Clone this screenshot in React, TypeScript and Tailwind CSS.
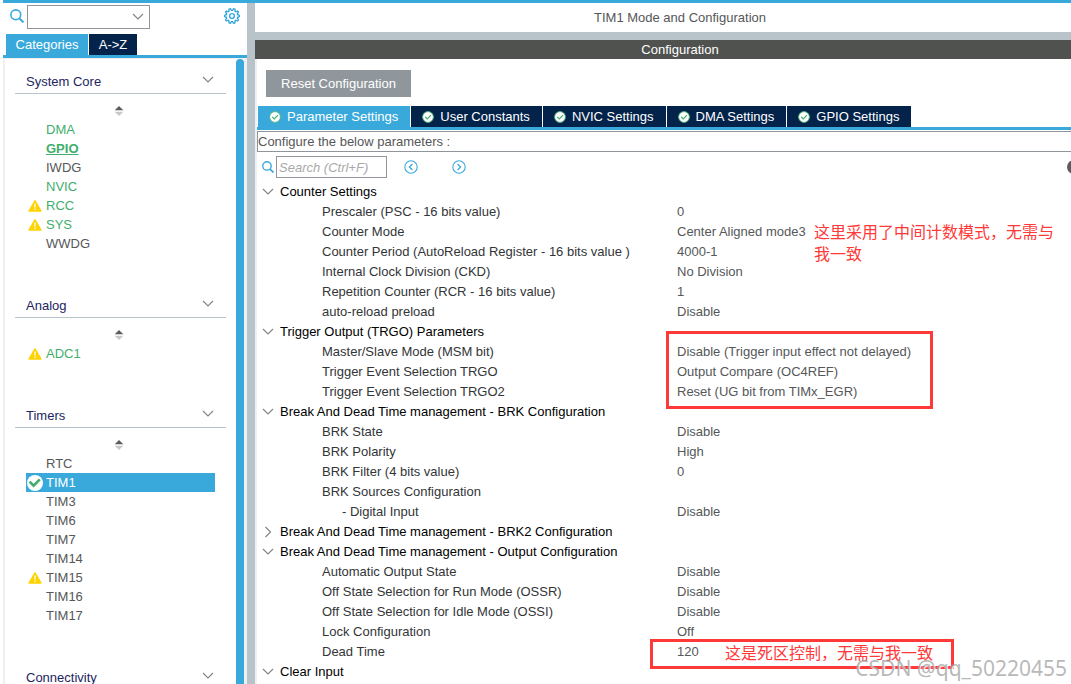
import React from "react";

type Status = "none" | "warning" | "ok";
type Item = { name: string; tone?: "green" | "gray"; status?: Status; active?: boolean; strong?: boolean };
type Category = { title: string; items: Item[] };

const categories: Category[] = [
  {
    title: "System Core",
    items: [
      { name: "DMA", tone: "green" },
      { name: "GPIO", tone: "green", strong: true },
      { name: "IWDG" },
      { name: "NVIC", tone: "green" },
      { name: "RCC", tone: "green", status: "warning" },
      { name: "SYS", tone: "green", status: "warning" },
      { name: "WWDG" },
    ],
  },
  { title: "Analog", items: [{ name: "ADC1", tone: "green", status: "warning" }] },
  {
    title: "Timers",
    items: [
      { name: "RTC" },
      { name: "TIM1", status: "ok", active: true },
      { name: "TIM3" },
      { name: "TIM6" },
      { name: "TIM7" },
      { name: "TIM14" },
      { name: "TIM15", status: "warning" },
      { name: "TIM16" },
      { name: "TIM17" },
    ],
  },
  { title: "Connectivity", items: [] },
];

type Param = { label: string; value?: string; nested?: boolean };
type Group = { title: string; open: boolean; params: Param[] };

const groups: Group[] = [
  {
    title: "Counter Settings",
    open: true,
    params: [
      { label: "Prescaler (PSC - 16 bits value)", value: "0" },
      { label: "Counter Mode", value: "Center Aligned mode3" },
      { label: "Counter Period (AutoReload Register - 16 bits value )", value: "4000-1" },
      { label: "Internal Clock Division (CKD)", value: "No Division" },
      { label: "Repetition Counter (RCR - 16 bits value)", value: "1" },
      { label: "auto-reload preload", value: "Disable" },
    ],
  },
  {
    title: "Trigger Output (TRGO) Parameters",
    open: true,
    params: [
      { label: "Master/Slave Mode (MSM bit)", value: "Disable (Trigger input effect not delayed)" },
      { label: "Trigger Event Selection TRGO", value: "Output Compare (OC4REF)" },
      { label: "Trigger Event Selection TRGO2", value: "Reset (UG bit from TIMx_EGR)" },
    ],
  },
  {
    title: "Break And Dead Time management - BRK Configuration",
    open: true,
    params: [
      { label: "BRK State", value: "Disable" },
      { label: "BRK Polarity", value: "High" },
      { label: "BRK Filter (4 bits value)", value: "0" },
      { label: "BRK Sources Configuration" },
      { label: "- Digital Input", value: "Disable", nested: true },
    ],
  },
  { title: "Break And Dead Time management - BRK2 Configuration", open: false, params: [] },
  {
    title: "Break And Dead Time management - Output Configuration",
    open: true,
    params: [
      { label: "Automatic Output State", value: "Disable" },
      { label: "Off State Selection for Run Mode (OSSR)", value: "Disable" },
      { label: "Off State Selection for Idle Mode (OSSI)", value: "Disable" },
      { label: "Lock Configuration", value: "Off" },
      { label: "Dead Time", value: "120" },
    ],
  },
  { title: "Clear Input", open: true, params: [] },
];

const tabs = ["Parameter Settings", "User Constants", "NVIC Settings", "DMA Settings", "GPIO Settings"];

function SearchIcon({ className }: { className: string }) {
  return (
    <svg viewBox="0 0 14 14" className={className} fill="none" stroke="#39a9dc" strokeWidth="1.6">
      <circle cx="5.8" cy="5.8" r="4.9" />
      <path d="M9.4 9.4 13.4 13.4" strokeWidth="2" />
    </svg>
  );
}

function Chevron({ open = true }: { open?: boolean }) {
  return (
    <svg viewBox="0 0 12 12" className="h-3 w-3 shrink-0" fill="none" stroke="#858585" strokeWidth="1.2">
      <path d={open ? "M1 3 6 8 11 3" : "M3.5 1 8.5 6 3.5 11"} />
    </svg>
  );
}

const gearPath = (() => {
  const points: string[] = [];
  for (let i = 0; i < 80; i++) {
    const angle = (i / 80) * Math.PI * 2;
    const radius = 6.6 + 0.9 * Math.max(-1, Math.min(1, 1.8 * Math.cos(angle * 10)));
    points.push(`${(8 + radius * Math.cos(angle)).toFixed(2)} ${(8 + radius * Math.sin(angle)).toFixed(2)}`);
  }
  return `M${points.join("L")}Z`;
})();

function GearIcon() {
  return (
    <svg viewBox="0 0 16 16" className="h-4 w-4" fill="none" stroke="#39a9dc" strokeWidth="1.4">
      <path d={gearPath} />
      <circle cx="8" cy="8" r="2.4" />
    </svg>
  );
}

function WarningIcon() {
  return (
    <svg viewBox="0 0 14 12" className="h-3 w-3.5">
      <path d="M7 .8 13 11H1Z" fill="#ffd300" stroke="#ffd300" strokeWidth="1.4" strokeLinejoin="round" />
      <path d="M7 3.6V7.4M7 8.6V10" stroke="#fff" strokeWidth="1.3" />
    </svg>
  );
}

function SelectedIcon() {
  return (
    <svg viewBox="0 0 16 16" className="h-4 w-4">
      <circle cx="8" cy="8" r="8" fill="#fff" />
      <path d="M2.6 6.6 6.6 10.6 12.8 4.4" fill="none" stroke="#3fae6c" strokeWidth="2.6" />
    </svg>
  );
}

function TabCheck() {
  return (
    <svg viewBox="0 0 12 12" className="h-3 w-3 shrink-0">
      <circle cx="6" cy="6" r="5.4" fill="#fff" stroke="#4fb57c" strokeWidth="0.9" />
      <path d="M3.2 5.8 5.3 7.9 9 4.2" fill="none" stroke="#3fae6c" strokeWidth="1.2" />
    </svg>
  );
}

function SortIcon() {
  return (
    <svg viewBox="0 0 10 10" className="h-2.5 w-2.5">
      <path d="M5 0 9.3 4.2H.7Z" fill="#5c5c5c" />
      <path d="M5 10 9.3 5.8H.7Z" fill="#c8c8c8" />
    </svg>
  );
}

function StepIcon({ back }: { back: boolean }) {
  return (
    <svg viewBox="0 0 14 14" className="h-3.5 w-3.5" fill="none" stroke="#39a9dc" strokeWidth="1.1">
      <circle cx="7" cy="7" r="6.2" />
      <path d={back ? "M8.4 4 5.4 7 8.4 10" : "M5.6 4 8.6 7 5.6 10"} strokeWidth="1.3" />
    </svg>
  );
}

function CategoryBlock({ title, items }: Category) {
  return (
    <section className="mb-10">
      <h2 className="mx-2.5 border-b border-[#b8c4ca]">
        <button className="flex h-6 w-full items-start justify-between pl-[11px] pr-3 pt-[3px] text-[#23255f]">
          {title}
          <span className="flex pt-0.5">
            <Chevron />
          </span>
        </button>
      </h2>
      {items.length > 0 && (
        <>
          <div className="flex h-[26px] items-center justify-center pr-[3px] pt-2">
            <button aria-label={`Sort ${title}`}>
              <SortIcon />
            </button>
          </div>
          <ul className="mx-[21px]">
            {items.map((item) => (
              <li key={item.name}>
                <button
                  className={`flex h-[19px] w-full items-center ${
                    item.active ? "bg-[#39a9dc] text-white" : item.tone === "green" ? "text-[#3fae6c]" : "text-[#555759]"
                  }`}
                >
                  <span className="flex w-5 shrink-0 justify-center pr-[3px]">
                    {item.status === "warning" && <WarningIcon />}
                    {item.status === "ok" && <SelectedIcon />}
                  </span>
                  <span className={item.strong ? "font-bold underline" : ""}>{item.name}</span>
                </button>
              </li>
            ))}
          </ul>
        </>
      )}
    </section>
  );
}

function Sidebar() {
  return (
    <aside className="flex w-[244px] shrink-0 flex-col overflow-hidden">
      <div className="flex h-[31px] shrink-0 items-start pl-[7px] pr-1 pt-0.5">
        <label htmlFor="peripheral" className="mt-1" aria-label="Find peripheral">
          <SearchIcon className="h-3.5 w-3.5" />
        </label>
        <div className="relative ml-[3px]">
          <select id="peripheral" className="block h-6 w-[123px] appearance-none border border-[#8f959b] bg-white">
            <option value=""></option>
          </select>
          <span className="pointer-events-none absolute right-1.5 top-1.5">
            <Chevron />
          </span>
        </div>
        <button aria-label="Settings" className="ml-auto mr-[3px] mt-[3px]">
          <GearIcon />
        </button>
      </div>
      <div className="flex shrink-0 gap-px border-b-[3px] border-[#39a9dc] pl-[3px] text-white">
        <button className="h-[21px] w-[82px] bg-[#39a9dc]">Categories</button>
        <button className="h-[21px] w-12 bg-[#03234b]">{"A->Z"}</button>
      </div>
      <div className="flex min-h-0 flex-1 border-l-2 border-r-[3px] border-t border-[#f0f0f0]">
        <div className="min-w-0 flex-1 overflow-hidden pt-2.5">
          {categories.map((category) => (
            <CategoryBlock key={category.title} {...category} />
          ))}
        </div>
        <div className="w-2 shrink-0 rounded-t bg-[#39a9dc]" />
      </div>
    </aside>
  );
}

function ParameterTable() {
  return (
    <div className="relative">
      <table className="w-full table-fixed border-collapse text-left">
        <colgroup>
          <col className="w-[420px]" />
          <col />
        </colgroup>
        {groups.map((group) => (
          <tbody key={group.title}>
            <tr className="h-5">
              <th colSpan={2} scope="rowgroup" className="p-0 pl-[5px] font-normal text-black">
                <button className="flex h-5 items-center gap-1.5">
                  <Chevron open={group.open} />
                  {group.title}
                </button>
              </th>
            </tr>
            {group.params.map((param) => (
              <tr key={param.label} className="h-5 leading-5">
                <th
                  scope="row"
                  className={`whitespace-nowrap p-0 font-normal text-[#333537] ${param.nested ? "pl-[85px]" : "pl-[65px]"}`}
                >
                  {param.label}
                </th>
                <td className="whitespace-nowrap p-0 text-[#555759]">{param.value}</td>
              </tr>
            ))}
          </tbody>
        ))}
      </table>
      <p className="absolute left-[557px] top-[38px] w-[250px] font-['Noto_Sans_CJK_SC',sans-serif] text-base leading-[22px] text-[#ff3838]">
        这里采用了中间计数模式，无需与我一致
      </p>
      <div className="absolute left-[409px] top-[149px] h-[78px] w-[267px] border-[3px] border-[#ff3838]" />
      <div className="absolute left-[393px] top-[457px] flex h-[30px] w-[304px] items-start border-[3px] border-[#ff3838] pl-[72px]">
        <p className="whitespace-nowrap font-['Noto_Sans_CJK_SC',sans-serif] text-base leading-5 text-[#ff3838]">
          这是死区控制，无需与我一致
        </p>
      </div>
    </div>
  );
}

function ConfigurationPanel() {
  return (
    <main className="flex min-w-0 flex-1 flex-col overflow-hidden border-l-8 border-[#b8c4ca]">
      <h1 className="flex h-[29px] shrink-0 items-center justify-center pl-[34px] text-[#555759]">
        TIM1 Mode and Configuration
      </h1>
      <div className="h-2 shrink-0 bg-[#b8c4ca]" />
      <h2 className="flex h-[19px] shrink-0 items-center justify-center bg-[#50524f] pl-[34px] text-white">
        Configuration
      </h2>
      <div className="flex min-h-0 flex-1 flex-col border-l-2 border-[#f0f0f0]">
        <div className="px-[9px] pb-[9px] pt-[11px]">
          <button className="h-[27px] w-[145px] bg-[#8f979d] text-white">Reset Configuration</button>
        </div>
        <div role="tablist" className="flex gap-px border-b-[3px] border-[#39a9dc] pl-px text-white">
          {tabs.map((tab, index) => (
            <button
              key={tab}
              role="tab"
              aria-selected={index === 0}
              className={`flex h-[21px] items-center gap-1.5 whitespace-nowrap pl-[11px] pr-3 ${index === 0 ? "bg-[#39a9dc]" : "bg-[#03234b]"}`}
            >
              <TabCheck />
              {tab}
            </button>
          ))}
        </div>
        <p className="mt-px flex h-[21px] items-center border border-r-0 border-[#8f959b] text-[#555759]">
          Configure the below parameters :
        </p>
        <div className="flex h-[30px] items-center pl-[5px]">
          <label htmlFor="param-search" aria-label="Search parameters">
            <SearchIcon className="h-3 w-3" />
          </label>
          <input
            id="param-search"
            type="search"
            placeholder="Search (Ctrl+F)"
            className="ml-0.5 h-[22px] w-[111px] border border-[#8f959b] px-0.5 italic placeholder:text-[#a9a9a9]"
          />
          <button aria-label="Previous" className="ml-[17px]">
            <StepIcon back />
          </button>
          <button aria-label="Next" className="ml-[34px]">
            <StepIcon back={false} />
          </button>
          <button aria-label="Information" className="-mr-2.5 ml-auto h-3.5 w-3.5 shrink-0 rounded-full bg-[#5c5c5c]" />
        </div>
        <ParameterTable />
      </div>
    </main>
  );
}

export default function App() {
  return (
    <div className="relative flex h-screen flex-col overflow-hidden bg-white pl-[3px] font-['Liberation_Sans',sans-serif] text-[13px] leading-5">
      <div className="h-[3px] shrink-0 bg-[#39a9dc]" />
      <div className="flex min-h-0 flex-1">
        <Sidebar />
        <ConfigurationPanel />
      </div>
      <p className="pointer-events-none absolute bottom-1 right-1 whitespace-nowrap font-['Noto_Sans',sans-serif] text-[21px] leading-6 text-[#999999]/70 [text-shadow:1px_1px_1px_#ffffff]">
        CSDN @qq_50220455
      </p>
    </div>
  );
}
